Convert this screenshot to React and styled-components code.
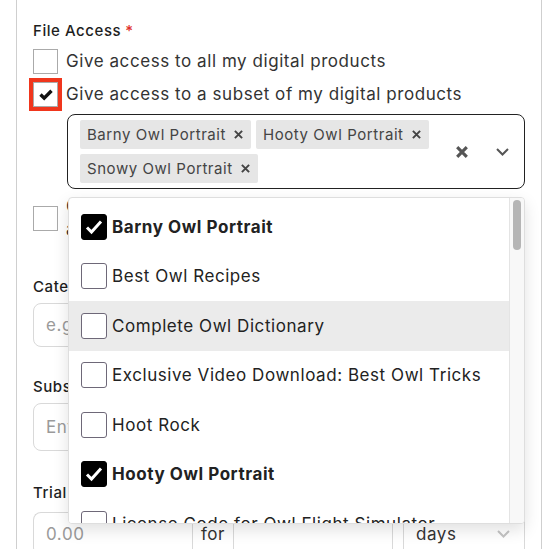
import React from 'react';
import styled, { createGlobalStyle } from 'styled-components';

const GlobalStyle = createGlobalStyle`
  html, body {
    margin: 0;
    background: #fff;
  }
  body {
    font-family: Inter, "Open Sans", sans-serif;
    letter-spacing: 0.035em;
    color: #333;
    overflow: hidden;
  }
  * { box-sizing: border-box; }
`;

const Panel = styled.div`
  margin: 0 16px;
  min-height: 100vh;
  border-left: 1px solid #cfcfcf;
  border-right: 1px solid #cfcfcf;
  padding: 22px 16px 0;
`;

const Label = styled.div`
  font-size: 15px;
  font-weight: 500;
  line-height: 18px;
  color: #1e1e1e;
  margin-top: ${p => p.$mt || 0}px;
  margin-bottom: ${p => p.$mb || 7}px;
`;

const Required = styled.span`
  color: #e0302a;
  margin-left: 4px;
`;

const CheckRow = styled.label`
  display: flex;
  align-items: center;
  gap: 8px;
  font-size: 17px;
  line-height: 23px;
  color: #333;
  margin-top: ${p => p.$mt || 0}px;
`;

const Box = styled.span`
  flex: none;
  width: 25px;
  height: 25px;
  border: 1px solid #aaa;
  background: #fff;
  display: flex;
  align-items: center;
  justify-content: center;
  outline: ${p => (p.$focus ? '4px solid #f0361d' : 'none')};
`;

const SelectWrap = styled.div`
  position: relative;
  margin: 7px 0 0 34px;
`;

const Control = styled.div`
  display: flex;
  min-height: 75px;
  border: 1px solid #222;
  border-radius: 8px;
  padding: 5px 2px 5px 12px;
`;

const Tags = styled.div`
  flex: 1;
  display: flex;
  flex-wrap: wrap;
  align-content: center;
  gap: 5px;
`;

const Tag = styled.span`
  display: flex;
  align-items: center;
  gap: 8px;
  height: 29px;
  padding: 0 8px 0 7px;
  background: #e6e6e6;
  border-radius: 2px;
  font-size: 15px;
  color: #444;
`;

const Indicator = styled.span`
  width: 40px;
  display: flex;
  align-items: center;
  justify-content: center;
  color: #555;
`;

const Menu = styled.div`
  position: absolute;
  top: calc(100% + 8px);
  left: 1px;
  right: 0;
  height: 327px;
  display: flex;
  background: #fff;
  border: 1px solid #dedede;
  border-radius: 4px;
  box-shadow: 0 6px 16px rgba(0, 0, 0, 0.12);
  overflow: hidden;
  z-index: 5;
`;

const List = styled.div`
  flex: 1;
  padding-top: 4px;
  overflow: hidden;
`;

const Item = styled.div`
  height: 49.5px;
  display: flex;
  align-items: center;
  gap: 5px;
  padding-left: 12px;
  background: ${p => (p.$active ? '#ebebeb' : '#fff')};
  font-size: 17px;
  font-weight: ${p => (p.$checked ? 700 : 400)};
  color: #222;
  white-space: nowrap;
`;

const ItemBox = styled.span`
  flex: none;
  width: 26px;
  height: 26px;
  border-radius: 3px;
  border: 1px solid ${p => (p.$checked ? '#000' : '#6e6878')};
  background: ${p => (p.$checked ? '#000' : '#fff')};
  display: flex;
  align-items: center;
  justify-content: center;
`;

const Track = styled.div`
  flex: none;
  width: 15px;
  padding: 2px 3px;
  background: #f8f8f8;
  border-left: 1px solid #e4e4e4;
`;

const Thumb = styled.div`
  height: 50px;
  border-radius: 4px;
  background: #b5b5b5;
`;

const Input = styled.div`
  height: ${p => p.$h || 44}px;
  display: flex;
  align-items: center;
  padding: 0 12px;
  border: 1px solid #d9d9d9;
  border-radius: 8px;
  font-size: 17px;
  color: #9a9a9a;
`;

const TrialRow = styled.div`
  display: flex;
  gap: 10px;
  height: 44px;
`;

const Group = styled.div`
  display: flex;
  width: 360px;
`;

const GroupInput = styled.div`
  width: ${p => p.$w}px;
  display: flex;
  align-items: center;
  padding: 0 12px;
  border: 1px solid #d9d9d9;
  border-right: ${p => (p.$last ? '1px solid #d9d9d9' : 'none')};
  border-radius: ${p => (p.$first ? '8px 0 0 8px' : '0')};
  font-size: 17px;
  color: #9a9a9a;
`;

const Addon = styled.div`
  width: 41px;
  display: flex;
  align-items: center;
  justify-content: center;
  border: 1px solid #d9d9d9;
  border-right: none;
  font-size: 17px;
  color: #333;
`;

const Unit = styled.div`
  flex: 1;
  display: flex;
  align-items: center;
  justify-content: space-between;
  padding: 0 14px 0 12px;
  border: 1px solid #d9d9d9;
  font-size: 17px;
  color: #333;
`;

const HeavyCheck = () => (
  <svg width="16" height="13" viewBox="0 0 16 13">
    <path d="M2.5 6.5 L6.2 10.2 L13.5 2.8" fill="none" stroke="#111" strokeWidth="3.4" />
  </svg>
);

const WhiteCheck = () => (
  <svg width="20" height="18" viewBox="0 0 20 18">
    <path d="M3 9.5 L7.5 14 L17 3.5" fill="none" stroke="#fff" strokeWidth="3" />
  </svg>
);

const Cross = ({ size = 8, stroke = 2 }) => (
  <svg width={size} height={size} viewBox="0 0 10 10">
    <path d="M1 1 L9 9 M9 1 L1 9" fill="none" stroke="currentColor" strokeWidth={stroke} />
  </svg>
);

const Chevron = ({ color = '#555' }) => (
  <svg width="13" height="8" viewBox="0 0 13 8">
    <path d="M1 1 L6.5 6.5 L12 1" fill="none" stroke={color} strokeWidth="2" />
  </svg>
);

const products = [
  { name: 'Barny Owl Portrait', checked: true },
  { name: 'Best Owl Recipes' },
  { name: 'Complete Owl Dictionary', active: true },
  { name: 'Exclusive Video Download: Best Owl Tricks' },
  { name: 'Hoot Rock' },
  { name: 'Hooty Owl Portrait', checked: true },
  { name: 'License Code for Owl Flight Simulator' },
  { name: 'Owl Sounds Collection' },
];

const selected = ['Barny Owl Portrait', 'Hooty Owl Portrait', 'Snowy Owl Portrait'];

export default function App() {
  return (
    <>
      <GlobalStyle />
      <Panel>
        <Label>
          File Access<Required>*</Required>
        </Label>
        <CheckRow $mt={9}>
          <Box />
          Give access to all my digital products
        </CheckRow>
        <CheckRow $mt={8}>
          <Box $focus>
            <HeavyCheck />
          </Box>
          Give access to a subset of my digital products
        </CheckRow>
        <SelectWrap>
          <Control>
            <Tags>
              {selected.map(s => (
                <Tag key={s}>
                  {s}
                  <Cross size={9} stroke={2.2} />
                </Tag>
              ))}
            </Tags>
            <Indicator>
              <Cross size={12} stroke={2.6} />
            </Indicator>
            <Indicator>
              <Chevron />
            </Indicator>
          </Control>
          <Menu>
            <List>
              {products.map(p => (
                <Item key={p.name} $checked={p.checked} $active={p.active}>
                  <ItemBox $checked={p.checked}>{p.checked && <WhiteCheck />}</ItemBox>
                  {p.name}
                </Item>
              ))}
            </List>
            <Track>
              <Thumb />
            </Track>
          </Menu>
        </SelectWrap>
        <CheckRow $mt={6}>
          <Box />
          Give access to all my digital products, including any I add to my store later
        </CheckRow>

        <Label $mt={37}>Category</Label>
        <Input>e.g. Art, Music, Software</Input>

        <Label $mt={31}>Subscription Name</Label>
        <Input $h={48}>Enter a name for this subscription</Input>

        <Label $mt={33} $mb={10}>Trial Period</Label>
        <TrialRow>
          <Group>
            <GroupInput $first $w={159}>0.00</GroupInput>
            <Addon>for</Addon>
            <GroupInput $last $w={160} />
          </Group>
          <Unit>
            days
            <Chevron color="#c4c4c4" />
          </Unit>
        </TrialRow>
      </Panel>
    </>
  );
}
